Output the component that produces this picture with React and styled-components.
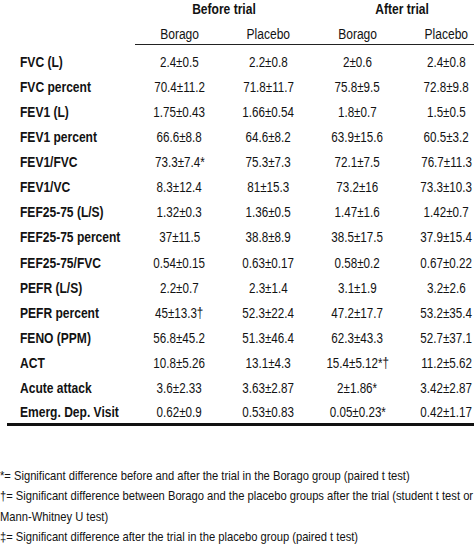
import React from "react";
import styled, { createGlobalStyle } from "styled-components";

const GlobalStyle = createGlobalStyle`
  html, body {
    margin: 0;
    padding: 0;
    background: #ffffff;
  }
  body {
    width: 474px;
    height: 551px;
    overflow: hidden;
    font-family: "Liberation Sans", Arial, sans-serif;
    color: #121212;
  }
`;

const Page = styled.div`
  width: 474px;
  height: 551px;
  overflow: hidden;
  background: #fff;
`;

/* condensed glyphs: the source uses a narrow Arial-like face */
const Narrow = styled.span`
  display: inline-block;
  white-space: nowrap;
  transform: scaleX(${(p) => p.$scale || 0.86});
  transform-origin: ${(p) => p.$origin || "center"};
`;

const Table = styled.div`
  display: grid;
  grid-template-columns: 128px repeat(4, 89px);
  margin-left: 7px;
  width: max-content;
`;

const GroupHead = styled.div`
  grid-column: span 2;
  height: 20px;
  line-height: 18px;
  text-align: center;
  font-weight: 700;
  font-size: 14px;
`;

const Blank = styled.div``;

const SubHead = styled.div`
  height: 25px;
  box-sizing: border-box;
  display: flex;
  align-items: flex-end;
  justify-content: center;
  padding-bottom: 2px;
  font-size: 14px;
  border-bottom: ${(p) => (p.$rule ? "1.5px solid #222" : "none")};
`;

const Spacer = styled.div`
  grid-column: 1 / -1;
  height: 4px;
`;

const Label = styled.div`
  height: 25.14px;
  box-sizing: border-box;
  display: flex;
  align-items: center;
  padding-left: 13px;
  font-weight: 700;
  font-size: 14px;
  white-space: nowrap;
  border-bottom: ${(p) => (p.$last ? "3px solid #111" : "none")};
`;

const Value = styled.div`
  height: 25.14px;
  box-sizing: border-box;
  display: flex;
  align-items: center;
  justify-content: center;
  font-size: 14px;
  white-space: nowrap;
  border-bottom: ${(p) => (p.$last ? "3px solid #111" : "none")};
`;

const Notes = styled.div`
  margin-top: 40px;
  font-size: 13px;
  line-height: 20.5px;
`;

const NoteLine = styled.div`
  white-space: nowrap;
`;

const rows = [
  ["FVC (L)", "2.4±0.5", "2.2±0.8", "2±0.6", "2.4±0.8"],
  ["FVC percent", "70.4±11.2", "71.8±11.7", "75.8±9.5", "72.8±9.8"],
  ["FEV1 (L)", "1.75±0.43", "1.66±0.54", "1.8±0.7", "1.5±0.5"],
  ["FEV1 percent", "66.6±8.8", "64.6±8.2", "63.9±15.6", "60.5±3.2"],
  ["FEV1/FVC", "73.3±7.4*", "75.3±7.3", "72.1±7.5", "76.7±11.3"],
  ["FEV1/VC", "8.3±12.4", "81±15.3", "73.2±16", "73.3±10.3"],
  ["FEF25-75 (L/S)", "1.32±0.3", "1.36±0.5", "1.47±1.6", "1.42±0.7"],
  ["FEF25-75 percent", "37±11.5", "38.8±8.9", "38.5±17.5", "37.9±15.4"],
  ["FEF25-75/FVC", "0.54±0.15", "0.63±0.17", "0.58±0.2", "0.67±0.22"],
  ["PEFR (L/S)", "2.2±0.7", "2.3±1.4", "3.1±1.9", "3.2±2.6"],
  ["PEFR percent", "45±13.3†", "52.3±22.4", "47.2±17.7", "53.2±35.4"],
  ["FENO (PPM)", "56.8±45.2", "51.3±46.4", "62.3±43.3", "52.7±37.1"],
  ["ACT", "10.8±5.26", "13.1±4.3", "15.4±5.12*†", "11.2±5.62"],
  ["Acute attack", "3.6±2.33", "3.63±2.87", "2±1.86*", "3.42±2.87"],
  ["Emerg. Dep. Visit", "0.62±0.9", "0.53±0.83", "0.05±0.23*", "0.42±1.17"],
];

const notes = [
  "*= Significant difference before and after the trial in the Borago group (paired t test)",
  "†= Significant difference between Borago and the placebo groups after the trial (student t test or",
  "Mann-Whitney U test)",
  "‡= Significant difference after the trial in the placebo group (paired t test)",
];

export default function App() {
  return (
    <Page>
      <GlobalStyle />
      <Table>
        <Blank />
        <GroupHead>
          <Narrow>Before trial</Narrow>
        </GroupHead>
        <GroupHead>
          <Narrow>After trial</Narrow>
        </GroupHead>
        <SubHead />
        <SubHead $rule>
          <Narrow>Borago</Narrow>
        </SubHead>
        <SubHead $rule>
          <Narrow>Placebo</Narrow>
        </SubHead>
        <SubHead $rule>
          <Narrow>Borago</Narrow>
        </SubHead>
        <SubHead $rule>
          <Narrow>Placebo</Narrow>
        </SubHead>
        <Spacer />
        {rows.map((r, i) => {
          const last = i === rows.length - 1;
          return (
            <React.Fragment key={r[0]}>
              <Label $last={last}>
                <Narrow $origin="left">{r[0]}</Narrow>
              </Label>
              {r.slice(1).map((v, j) => (
                <Value key={j} $last={last}>
                  <Narrow $scale={0.83}>{v}</Narrow>
                </Value>
              ))}
            </React.Fragment>
          );
        })}
      </Table>
      <Notes>
        {notes.map((n) => (
          <NoteLine key={n}>
            <Narrow $origin="left">{n}</Narrow>
          </NoteLine>
        ))}
      </Notes>
    </Page>
  );
}
